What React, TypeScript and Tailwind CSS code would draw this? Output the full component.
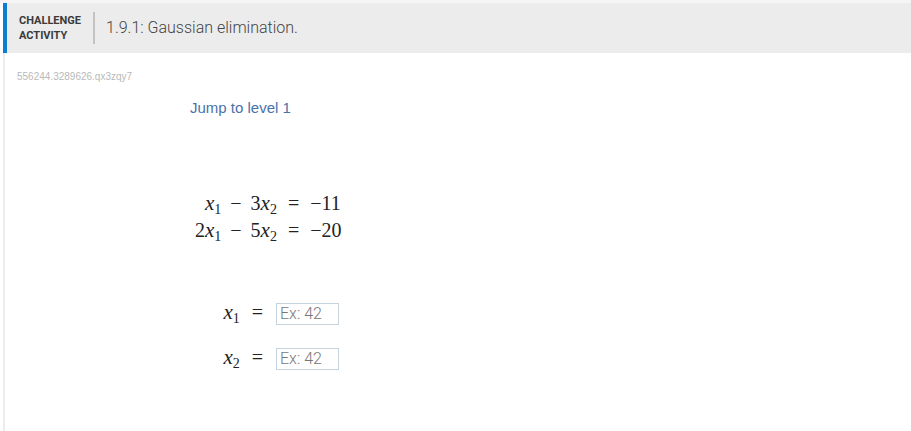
import React from "react";

const serif = "font-['Liberation_Serif','Times_New_Roman',serif]";

const Var = ({ sub }: { sub: string }) => (
  <span>
    <span className="italic text-[21px]">x</span>
    <span className="relative top-[4px] text-[14px]">{sub}</span>
  </span>
);

const AnswerRow = ({ sub }: { sub: string }) => (
  <div className="flex items-center h-[22px]">
    <div className={`${serif} text-[20px] leading-[22px] text-[#222] w-[65px] flex justify-end gap-[12px] pr-[13px]`}>
      <Var sub={sub} />
      <span>=</span>
    </div>
    <input
      placeholder="Ex: 42"
      className="w-[63px] h-[22px] border border-[#c5d3de] px-[3px] text-[16px] font-light font-['Roboto',sans-serif] text-[#333] placeholder:text-[#777] outline-none"
    />
  </div>
);

export default function App() {
  return (
    <div className="w-[911px] h-[431px] bg-white font-['Roboto',sans-serif] overflow-hidden">
      <div className="h-[3px] bg-[#f5f5f5]" />
      <div className="flex h-[50px] ml-[3px] bg-[#ececec] border-l-[4px] border-[#0b7ed0] items-center">
        <div className="pl-[12px] pr-[12px] text-[11px] font-bold leading-[15px] text-[#3a3a3a]">
          <div>CHALLENGE</div>
          <div>ACTIVITY</div>
        </div>
        <div className="w-[2px] h-[32px] bg-[#c3c3c3]" />
        <div className="pl-[11px] text-[16px] font-light text-[#444]">1.9.1: Gaussian elimination.</div>
      </div>
      <div className="ml-[3px] border-l-[2px] border-[#ececec] h-[378px]">
        <div className="pl-[12px] pt-[16px] text-[10px] text-[#b9b9b9] font-['Liberation_Sans',Arial,sans-serif]">
          556244.3289626.qx3zqy7
        </div>
        <div className="pl-[185px] pt-[13px] text-[15px] text-[#4a72aa] font-['Liberation_Sans',Arial,sans-serif]">
          Jump to level 1
        </div>
        <div className={`${serif} text-[20px] text-[#222] pl-[190px] pt-[71px] leading-[25px]`}>
          <div className="grid grid-cols-[auto_auto_auto_auto_auto] w-fit items-baseline">
            <div className="text-right">
              <Var sub="1" />
            </div>
            <div className="px-[9px]">−</div>
            <div>
              3<Var sub="2" />
            </div>
            <div className="px-[11px]">=</div>
            <div>−11</div>
            <div className="text-right">
              2<Var sub="1" />
            </div>
            <div className="px-[9px]">−</div>
            <div>
              5<Var sub="2" />
            </div>
            <div className="px-[11px]">=</div>
            <div>−20</div>
          </div>
        </div>
        <div className="pl-[206px] pt-[58px] flex flex-col gap-[23px]">
          <AnswerRow sub="1" />
          <AnswerRow sub="2" />
        </div>
      </div>
    </div>
  );
}
